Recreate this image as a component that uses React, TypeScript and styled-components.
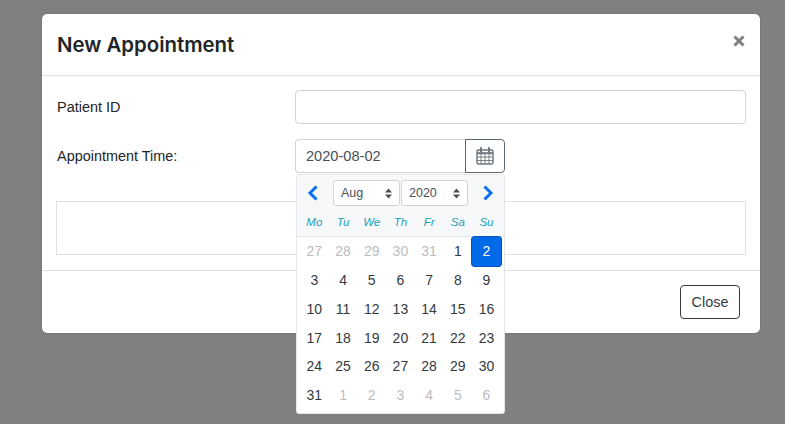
import styled, { createGlobalStyle } from 'styled-components';

const GlobalStyle = createGlobalStyle`
  html, body {
    margin: 0;
    height: 100%;
    overflow: hidden;
    background: #808080;
    font-family: "Liberation Sans", Arial, sans-serif;
    color: #212529;
  }
`;

const Backdrop = styled.div`
  width: 785px;
  height: 424px;
  padding: 14px 25px 0 42px;
  box-sizing: border-box;
`;

const Modal = styled.div`
  width: 718px;
  height: 319px;
  background: #fff;
  border-radius: 5px;
  display: flex;
  flex-direction: column;
  box-shadow: 0 0 1px rgba(0, 0, 0, 0.6);
`;

const Header = styled.div`
  height: 61px;
  flex: none;
  padding: 0 15px;
  display: flex;
  align-items: center;
  justify-content: space-between;
  border-bottom: 1px solid #dee2e6;
`;

const Title = styled.h5`
  margin: 0 0 1px;
  font-family: Inter, "Liberation Sans", sans-serif;
  font-size: 20.4px;
  font-weight: 600;
  color: #212529;
`;

const CloseX = styled.span`
  width: 12px;
  height: 12px;
  margin-bottom: 7px;
  display: flex;
  color: #7f7f7f;
`;

const Body = styled.div`
  flex: 1;
  padding: 14px 14px 15px 14px;
  display: flex;
  flex-direction: column;
`;

const FormRow = styled.div`
  display: flex;
  align-items: center;
  height: 34px;
  margin-bottom: 15px;
`;

const Label = styled.label`
  width: 238px;
  padding-left: 1px;
  flex: none;
  font-size: 14.45px;
  color: #212529;
`;

const TextInput = styled.div`
  flex: 1;
  height: 34px;
  box-sizing: border-box;
  border: 1px solid #ced4da;
  border-radius: 4px;
`;

const DateField = styled.div`
  position: relative;
  display: flex;
  width: 210px;
  height: 34px;
`;

const DateInput = styled.div`
  flex: 1;
  box-sizing: border-box;
  height: 34px;
  padding: 0 10px;
  display: flex;
  align-items: center;
  font-size: 14.6px;
  color: #495057;
  border: 1px solid #ced4da;
  border-right: none;
  border-radius: 4px 0 0 4px;
`;

const CalendarButton = styled.div`
  width: 40px;
  height: 34px;
  box-sizing: border-box;
  display: flex;
  align-items: center;
  justify-content: center;
  border: 1px solid #5a6670;
  border-radius: 0 4px 4px 0;
  color: #6c757d;
`;

const Popover = styled.div`
  position: absolute;
  top: 35px;
  left: 1px;
  width: 209px;
  height: 240px;
  box-sizing: border-box;
  background: #fff;
  border: 1px solid #e4e6e9;
  border-radius: 3px;
  display: flex;
  flex-direction: column;
`;

const CalHeader = styled.div`
  height: 62px;
  flex: none;
  box-sizing: border-box;
  background: #f7f8fa;
  border-bottom: 1px solid #e4e6e9;
`;

const MonthBar = styled.div`
  height: 36px;
  display: flex;
  align-items: center;
  justify-content: space-between;
  padding: 0 10px;
`;

const NavArrow = styled.span`
  display: flex;
  color: #0a6ff0;
`;

const SelectGroup = styled.div`
  display: flex;
  gap: 1px;
`;

const FakeSelect = styled.div`
  width: 67px;
  height: 26px;
  box-sizing: border-box;
  padding: 0 7px;
  display: flex;
  align-items: center;
  justify-content: space-between;
  background: #fff;
  border: 1px solid #ced4da;
  border-radius: 3px;
  font-size: 12.5px;
  color: #495057;
`;

const Grid = styled.div`
  display: grid;
  grid-template-columns: repeat(7, 28.7px);
  padding-left: 3px;
`;

const WeekDay = styled.div`
  height: 22px;
  display: flex;
  align-items: center;
  justify-content: center;
  font-size: 11.5px;
  font-style: italic;
  color: #17a2b8;
`;

const Day = styled.div<{ $muted?: boolean; $active?: boolean }>`
  display: flex;
  align-items: center;
  justify-content: center;
  font-size: 14px;
  border-radius: 4px;
  margin: ${(p) => (p.$active ? '-1px' : '0')};
  color: ${(p) => (p.$active ? '#fff' : p.$muted ? '#b9bdc1' : '#343a40')};
  background: ${(p) => (p.$active ? '#0069e8' : 'transparent')};
  outline: ${(p) => (p.$active ? '1px solid #0057c2' : 'none')};
  outline-offset: -1px;
`;

const DayGrid = styled(Grid)`
  grid-auto-rows: 28.8px;
  margin-top: -0.1px;
`;

const Placeholder = styled.div`
  height: 54px;
  box-sizing: border-box;
  margin-top: 13px;
  border: 1px solid #dee2e6;
`;

const Footer = styled.div`
  height: 63px;
  flex: none;
  box-sizing: border-box;
  border-top: 1px solid #dee2e6;
  padding: 14px 20px 0 0;
  display: flex;
  justify-content: flex-end;
  align-items: flex-start;
`;

const CloseButton = styled.button`
  width: 60px;
  height: 34px;
  padding: 0;
  background: #fff;
  border: 1px solid #343a40;
  border-radius: 4px;
  font-family: inherit;
  font-size: 14.4px;
  color: #343a40;
`;

const Updown = () => (
  <svg width="7" height="11" viewBox="0 0 7 11" fill="#495057">
    <path d="M3.5 0.5 7 4.5H0zM3.5 10.5 0 6.5h7z" />
  </svg>
);

const Chevron = ({ flip }: { flip?: boolean }) => (
  <svg width="12" height="16" viewBox="0 0 12 16" fill="none" stroke="currentColor" strokeWidth="3" style={flip ? { transform: 'scaleX(-1)' } : undefined}>
    <path d="M9.5 1.5 3 8l6.5 6.5" />
  </svg>
);

const CalendarIcon = () => (
  <svg width="18" height="18" viewBox="0 0 18 18" fill="none" stroke="currentColor" strokeWidth="1">
    <rect x="1" y="3" width="16" height="14" rx="1.5" strokeWidth="1.4" />
    <path d="M1 6.2h16" strokeWidth="2" />
    <path d="M5 7v10M9 7v10M13 7v10M1 10h16M1 13.5h16" strokeWidth="0.9" />
    <path d="M5 1v4M13 1v4" strokeWidth="2" strokeLinecap="round" />
  </svg>
);

const weekDays = ['Mo', 'Tu', 'We', 'Th', 'Fr', 'Sa', 'Su'];

const days: { n: number; muted?: boolean }[] = [
  ...[27, 28, 29, 30, 31].map((n) => ({ n, muted: true })),
  ...Array.from({ length: 31 }, (_, i) => ({ n: i + 1 })),
  ...[1, 2, 3, 4, 5, 6].map((n) => ({ n, muted: true })),
];

export default function App() {
  return (
    <>
      <GlobalStyle />
      <Backdrop>
        <Modal>
          <Header>
            <Title>New Appointment</Title>
            <CloseX>
              <svg width="12" height="12" viewBox="0 0 12 12" stroke="currentColor" strokeWidth="3">
                <path d="M1.5 1.5l9 9M10.5 1.5l-9 9" />
              </svg>
            </CloseX>
          </Header>
          <Body>
            <FormRow>
              <Label>Patient ID</Label>
              <TextInput />
            </FormRow>
            <FormRow>
              <Label>Appointment Time:</Label>
              <DateField>
                <DateInput>2020-08-02</DateInput>
                <CalendarButton>
                  <CalendarIcon />
                </CalendarButton>
                <Popover>
                  <CalHeader>
                    <MonthBar>
                      <NavArrow>
                        <Chevron />
                      </NavArrow>
                      <SelectGroup>
                        <FakeSelect>
                          Aug
                          <Updown />
                        </FakeSelect>
                        <FakeSelect>
                          2020
                          <Updown />
                        </FakeSelect>
                      </SelectGroup>
                      <NavArrow>
                        <Chevron flip />
                      </NavArrow>
                    </MonthBar>
                    <Grid>
                      {weekDays.map((d) => (
                        <WeekDay key={d}>{d}</WeekDay>
                      ))}
                    </Grid>
                  </CalHeader>
                  <DayGrid>
                    {days.map((d, i) => (
                      <Day key={i} $muted={d.muted} $active={!d.muted && d.n === 2}>
                        {d.n}
                      </Day>
                    ))}
                  </DayGrid>
                </Popover>
              </DateField>
            </FormRow>
            <Placeholder />
          </Body>
          <Footer>
            <CloseButton>Close</CloseButton>
          </Footer>
        </Modal>
      </Backdrop>
    </>
  );
}
